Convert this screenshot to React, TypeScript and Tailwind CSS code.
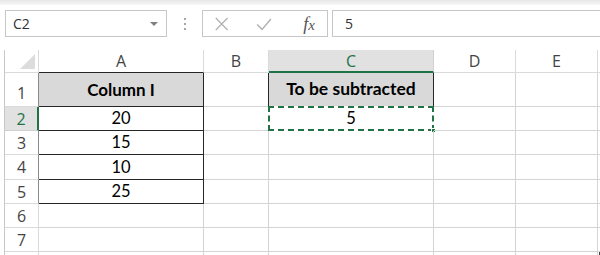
import React from "react";

type CellProps = {
  children?: React.ReactNode;
  className?: string;
};

function Cell({ children, className = "" }: CellProps) {
  return (
    <div className={`relative flex items-center justify-center border-r border-b ${className}`}>
      {children}
    </div>
  );
}

export default function App() {
  const hdrFont = { fontFamily: '"Open Sans", "Noto Sans", sans-serif' };
  const cellFont = { fontFamily: 'Lato, "Liberation Sans", sans-serif' };
  const rows = [6, 7];
  return (
    <div className="w-[600px] h-[255px] overflow-hidden bg-white flex flex-col" style={hdrFont}>
      <div className="shrink-0 h-[5px] bg-gradient-to-b from-[#e6e6e6] to-[#f8f8f8]" />
      {/* formula bar */}
      <div className="shrink-0 mt-[5px] h-[27px] flex pl-[5px]">
        <div className="w-[162px] h-full border border-[#c6c6c6] flex items-center pl-[7px] pr-[8px] text-[14px] text-[#333]">
          <span className="flex-1">C2</span>
          <span className="w-0 h-0 border-l-[4px] border-r-[4px] border-t-[4px] border-l-transparent border-r-transparent border-t-[#808080]" />
        </div>
        <div className="w-[35px] flex flex-col items-center justify-center gap-[3px]">
          <span className="w-[2px] h-[2px] bg-[#a8a8a8]" />
          <span className="w-[2px] h-[2px] bg-[#a8a8a8]" />
          <span className="w-[2px] h-[2px] bg-[#a8a8a8]" />
        </div>
        <div className="w-[126px] h-full border border-[#c6c6c6] flex items-center">
          <svg width="126" height="25" viewBox="0 0 126 25">
            <path d="M13 7 L25 19 M25 7 L13 19" stroke="#b4b4b4" strokeWidth="1.4" fill="none" />
            <path d="M55 13.5 L60 18.5 L69 8" stroke="#b4b4b4" strokeWidth="1.6" fill="none" />
          </svg>
        </div>
        <div className="-ml-[126px] w-[126px] h-[27px] flex items-center justify-end pr-[13px]">
          <span className="italic text-[18px] leading-none text-[#555]" style={{ fontFamily: '"Liberation Serif", serif' }}>
            f<span className="text-[15px]">x</span>
          </span>
        </div>
        <div className="ml-[4px] flex-1 h-full border border-r-0 border-[#c6c6c6] flex items-center pl-[12px] text-[14px] text-[#333]">
          5
        </div>
      </div>
      {/* sheet */}
      <div className="shrink-0 mt-[13px] ml-[4px] border-l border-[#c8c8c8] grid grid-cols-[34px_165px_65px_165px_82px_82px_1fr] grid-rows-[23px_34px_24px_24px_25px_24px_24px_24px_24px] text-[#444]">
        {/* header row */}
        <div className="relative border-r border-b border-[#dadada] bg-white">
          <svg className="absolute right-[3px] bottom-[3px]" width="15" height="15" viewBox="0 0 15 15">
            <path d="M15 0 L15 15 L0 15 Z" fill="#dcdcdc" />
          </svg>
        </div>
        <Cell className="border-[#dadada] border-b-[#262626] text-[16px]">A</Cell>
        <Cell className="border-[#dadada] text-[16px]">B</Cell>
        <Cell className="bg-[#e1e1e1] border-[#d0d0d0] border-b-2 border-b-[#217346] text-[16px] text-[#217346]">C</Cell>
        <Cell className="border-[#dadada] text-[16px]">D</Cell>
        <Cell className="border-[#dadada] text-[16px]">E</Cell>
        <Cell className="border-[#dadada] border-r-0" />

        {/* row 1 */}
        <div className="flex items-end justify-center pb-[1px] border-r border-b border-r-[#8a8a8a] border-b-[#dadada] text-[16px]">1</div>
        <Cell className="bg-[#d9d9d9] border-[#262626] font-bold text-[17px] text-black">
          <span style={cellFont}>Column I</span>
        </Cell>
        <Cell className="border-[#d4d4d4] border-r-[#262626]" />
        <Cell className="bg-[#d9d9d9] border-[#262626] font-bold text-[17.5px] text-black">
          <span style={cellFont}>To be subtracted</span>
        </Cell>
        <Cell className="border-[#d4d4d4]" />
        <Cell className="border-[#d4d4d4]" />
        <Cell className="border-[#d4d4d4] border-r-0" />

        {/* row 2 */}
        <div className="flex items-center justify-center bg-[#e1e1e1] border-r-2 border-b border-r-[#217346] border-b-[#d0d0d0] text-[16px] text-[#217346]">2</div>
        <Cell className="border-[#262626] text-[16.5px] text-black"><span style={cellFont}>20</span></Cell>
        <Cell className="border-[#d4d4d4]" />
        <Cell className="border-[#d4d4d4] text-[16.5px] text-black">
          <span style={cellFont}>5</span>
          <div className="absolute -left-[1px] -top-[1px] -right-[1px] -bottom-[1px] border-2 border-white" />
          <div className="absolute -left-[1px] -top-[1px] -right-[1px] -bottom-[1px] border-2 border-dashed border-[#217346]" />
          <div className="absolute -right-[3px] -bottom-[3px] w-[5px] h-[5px] bg-[#217346] border border-white" />
        </Cell>
        <Cell className="border-[#d4d4d4]" />
        <Cell className="border-[#d4d4d4]" />
        <Cell className="border-[#d4d4d4] border-r-0" />

        {[
          ["3", "15"],
          ["4", "10"],
          ["5", "25"],
        ].map(([n, v]) => (
          <React.Fragment key={n}>
            <div className="flex items-center justify-center border-r border-b border-r-[#8a8a8a] border-b-[#dadada] text-[16px]">{n}</div>
            <Cell className="border-[#262626] text-[16.5px] text-black"><span style={cellFont}>{v}</span></Cell>
            <Cell className="border-[#d4d4d4]" />
            <Cell className="border-[#d4d4d4]" />
            <Cell className="border-[#d4d4d4]" />
            <Cell className="border-[#d4d4d4]" />
            <Cell className="border-[#d4d4d4] border-r-0" />
          </React.Fragment>
        ))}

        {rows.map((n) => (
          <React.Fragment key={n}>
            <div className="flex items-center justify-center border-r border-b border-[#dadada] text-[16px]">{n}</div>
            <Cell className="border-[#d4d4d4]" />
            <Cell className="border-[#d4d4d4]" />
            <Cell className="border-[#d4d4d4]" />
            <Cell className="border-[#d4d4d4]" />
            <Cell className="border-[#d4d4d4]" />
            <Cell className="border-[#d4d4d4] border-r-0" />
          </React.Fragment>
        ))}
        <div className="border-r border-[#dadada]" />
        <Cell className="border-[#d4d4d4] border-b-0" />
        <Cell className="border-[#d4d4d4] border-b-0" />
        <Cell className="border-[#d4d4d4] border-b-0" />
        <Cell className="border-[#d4d4d4] border-b-0" />
        <Cell className="border-[#d4d4d4] border-b-0" />
        <Cell className="border-0" />
      </div>
    </div>
  );
}
